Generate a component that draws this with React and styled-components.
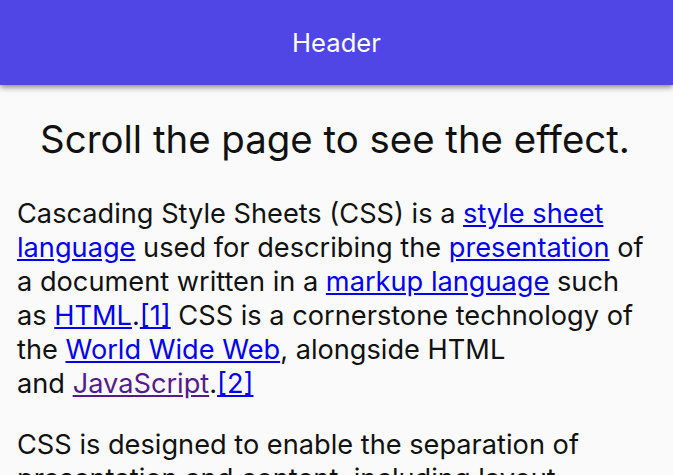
import React from 'react';
import styled, { createGlobalStyle } from 'styled-components';

const Global = createGlobalStyle`
  html, body {
    margin: 0;
    padding: 0;
    background: #fafafa;
  }
`;

const HeaderBar = styled.header`
  height: 85px;
  background: #4f46e5;
  color: #fff;
  display: flex;
  align-items: center;
  justify-content: center;
  font-family: Inter, sans-serif;
  font-size: 25.6px;
  box-shadow: 0 2px 6px rgba(0, 0, 0, 0.5);
  position: relative;
  z-index: 1;
`;

const Main = styled.main`
  padding: 0 20px 0 17px;
  font-family: Inter, sans-serif;
  color: #111;
`;

const Title = styled.h1`
  margin: 30px 0 34px;
  text-align: center;
  font-weight: 400;
  font-size: 38.4px;
  line-height: 48px;
`;

const Para = styled.p`
  margin: 0 0 1em;
  font-size: 27.2px;
  line-height: 34px;
  font-weight: 400;
`;

const Link = styled.a`
  color: ${({ $visited }) => ($visited ? '#551a8b' : '#0000ee')};
`;

export default function App() {
  return (
    <>
      <Global />
      <HeaderBar>Header</HeaderBar>
      <Main>
        <Title>Scroll the page to see the effect.</Title>
        <Para>
          Cascading Style Sheets (CSS) is a <Link href="#">style sheet language</Link> used for
          describing the <Link href="#">presentation</Link> of a document written in
          a <Link href="#">markup language</Link> such as <Link href="#">HTML</Link>.
          <Link href="#">[1]</Link> CSS is a cornerstone technology of the{' '}
          <Link href="#">World Wide Web</Link>, alongside HTML and{'\u00a0'}
          <Link href="#" $visited>JavaScript</Link>.<Link href="#">[2]</Link>
        </Para>
        <Para>
          CSS is designed to enable the separation of presentation and content, including
          layout, colors, and fonts.
        </Para>
      </Main>
    </>
  );
}
